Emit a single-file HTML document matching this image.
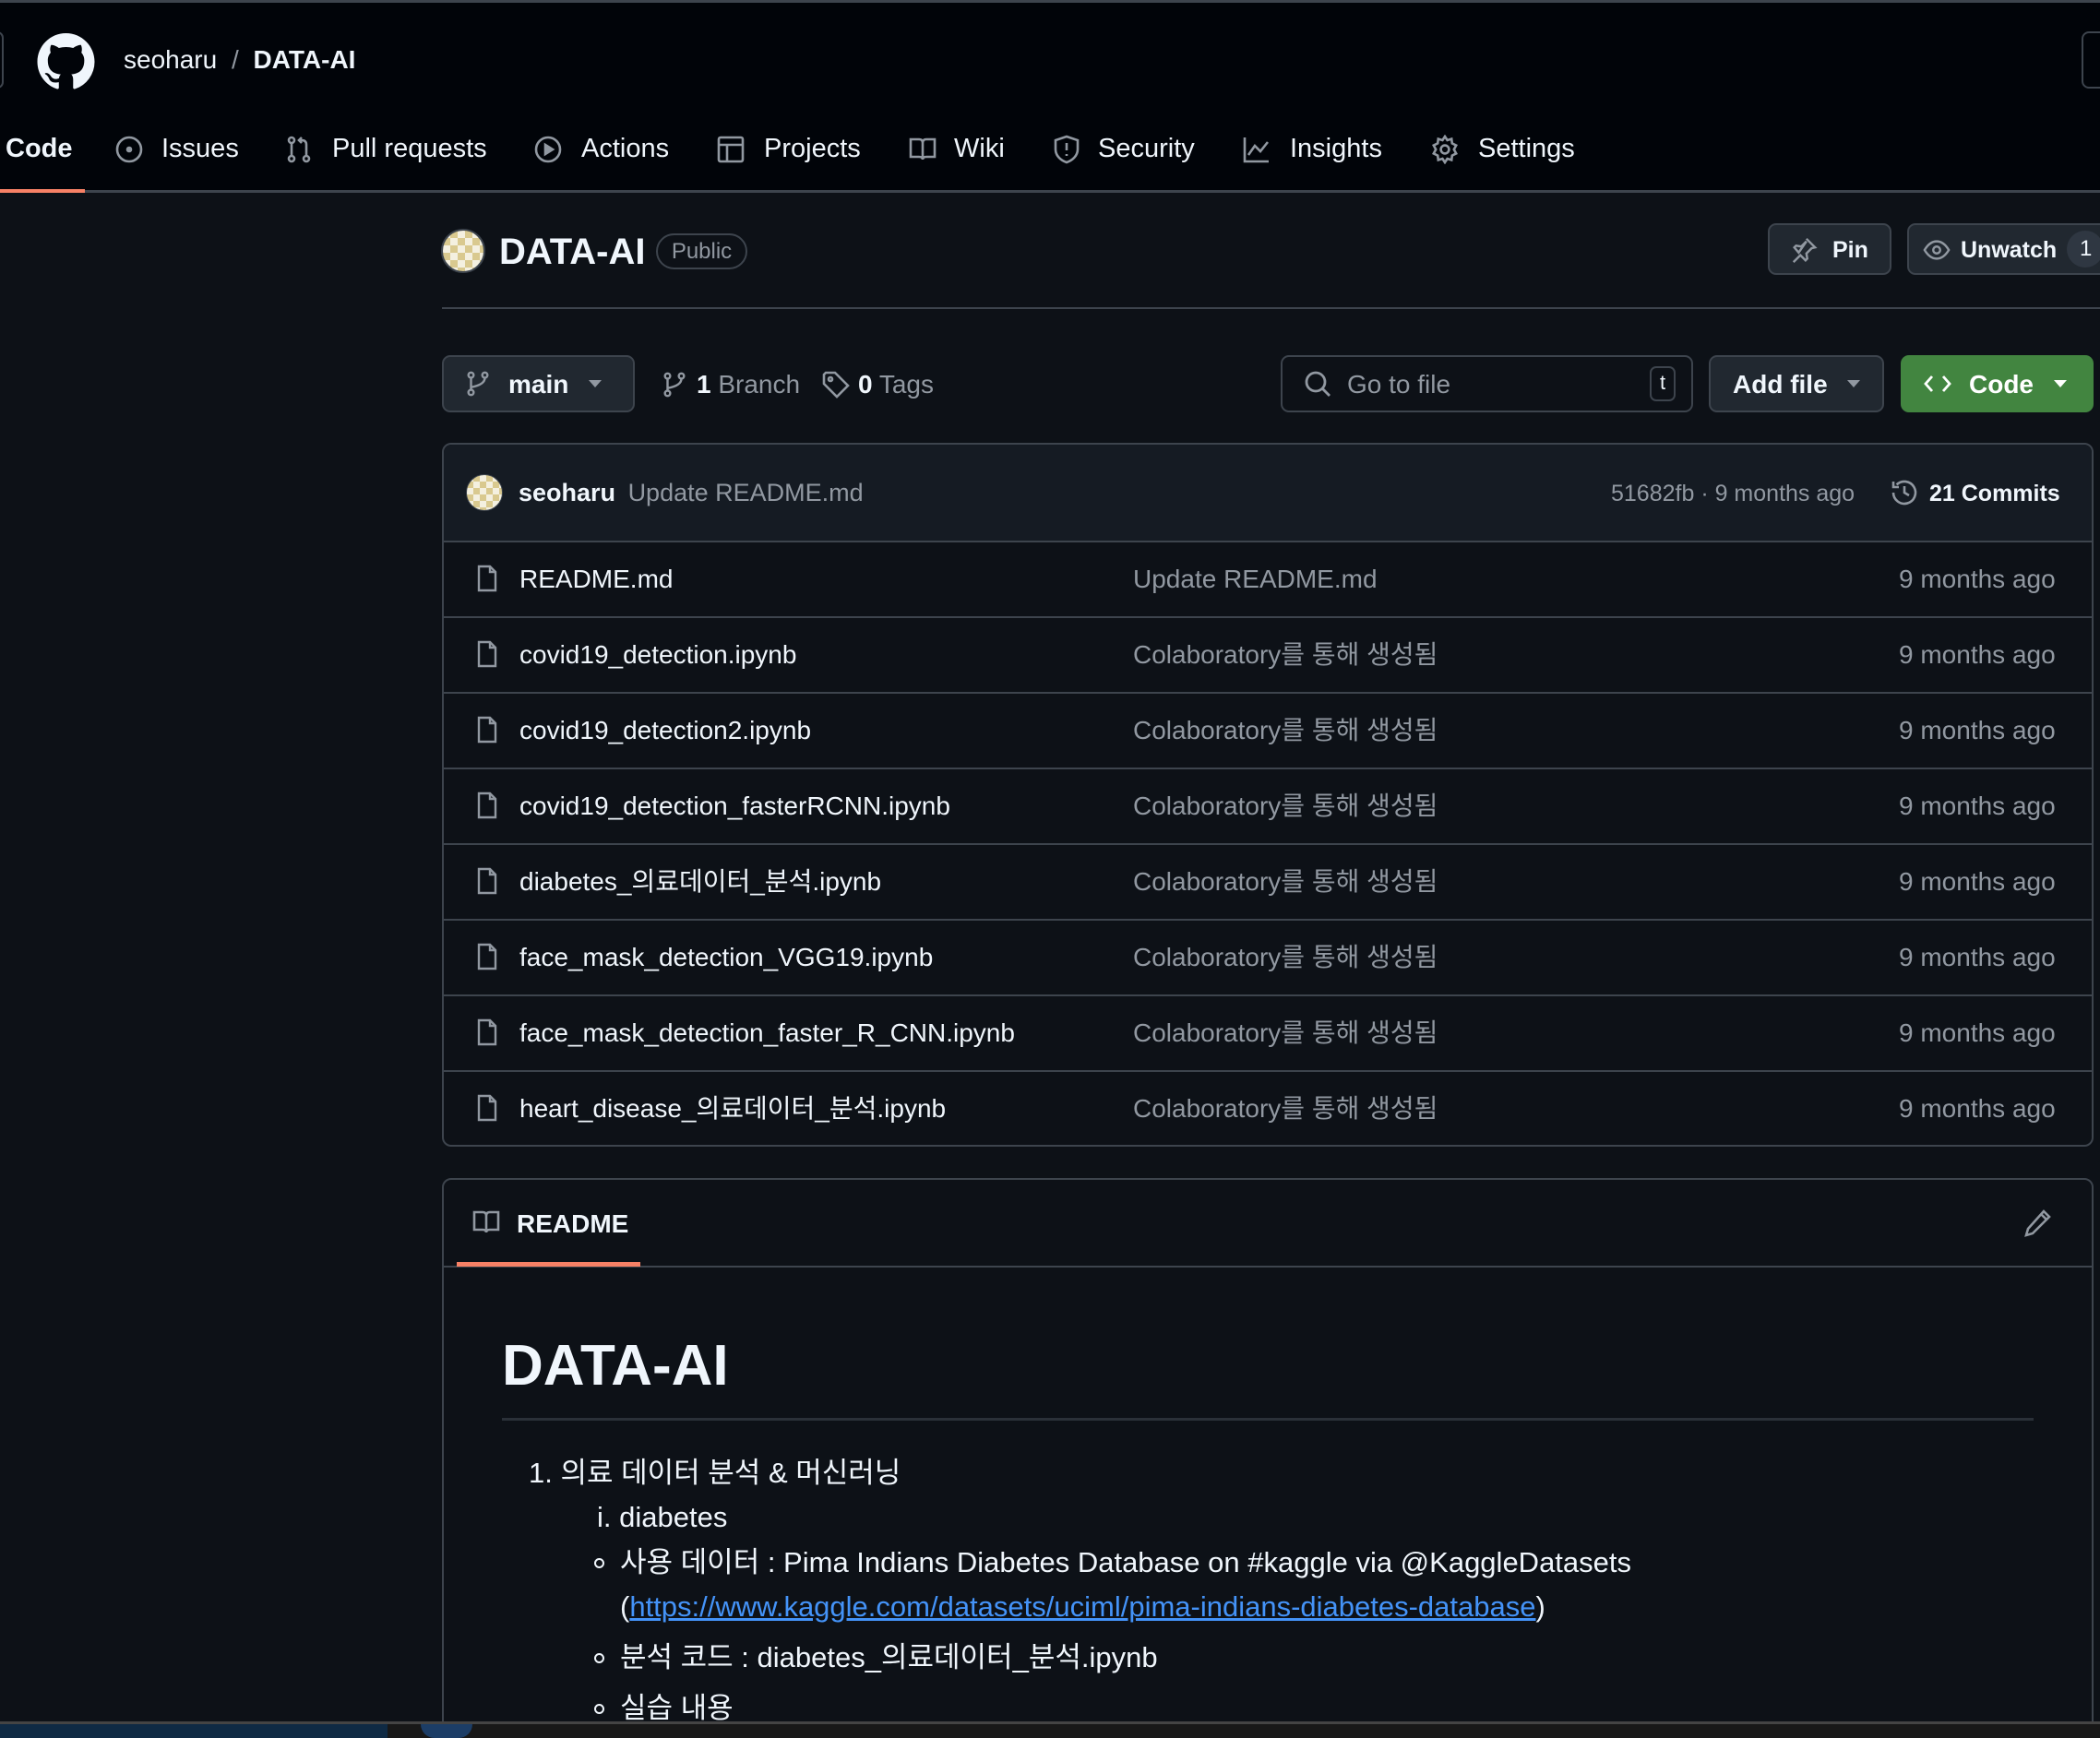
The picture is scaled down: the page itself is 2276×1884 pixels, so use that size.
<!DOCTYPE html>
<html style="width:2276px;height:1884px;overflow:hidden"><head><meta charset="utf-8"><style>
*{margin:0;padding:0;box-sizing:border-box}
html,body{width:2276px;height:1884px;overflow:hidden}
body{background:#0d1117;position:relative;font-family:"Liberation Sans","Noto Sans CJK KR",sans-serif;color:#f0f6fc}
.a{position:absolute;white-space:nowrap;line-height:1.2}
.g{color:#9198a1}
.b{font-weight:bold}
svg{position:absolute}
.btn{position:absolute;background:#212830;border:2px solid #3d444d;border-radius:9px}
.row{position:absolute;left:479px;width:1790px;height:82px;border-top:2px solid #3d444d}
.fr .a{line-height:34px;height:34px}
.dot{position:absolute;width:11px;height:11px;border:2px solid #f0f6fc;border-radius:50%}
</style></head><body>
<div class="a" style="left:0;top:0;width:2276px;height:209px;background:#010409;border-bottom:3px solid #3d444d"></div>
<div class="a" style="left:0;top:0;width:2276px;height:3px;background:#3d444d"></div>
<div class="a" style="left:0;top:205px;width:92px;height:4px;background:#f78166"></div>
<div class="a" style="left:-10px;top:34px;width:14px;height:62px;border:2px solid #3d444d;border-radius:8px"></div>
<div class="a" style="left:2256px;top:34px;width:40px;height:62px;border:2px solid #3d444d;border-radius:8px"></div>
<svg style="left:40px;top:36px" width="63" height="62" viewBox="0 0 16 16"><path fill="#f0f6fc" d="M8 0C3.58 0 0 3.580 0 8c0 3.54 2.29 6.53 5.47 7.59.4.07.55-.17.55-.38 0-.19-.01-.82-.01-1.49-2.010.37-2.53-.49-2.69-.94-.09-.23-.48-.94-.82-1.13-.28-.15-.68-.52-.01-.53.63-.01 1.08.58 1.23.82.72 1.21 1.87.87 2.33.66.07-.52.28-.87.51-1.07-1.78-.2-3.64-.89-3.64-3.95 0-.87.31-1.59.82-2.15-.08-.2-.36-1.02.08-2.12 0 0 .67-.21 2.2.82.64-.18 1.32-.27 2-.27.68 0 1.36.09 2 .27 1.53-1.04 2.2-.82 2.2-.82.44 1.1.16 1.92.08 2.12.51.56.82 1.27.82 2.15 0 3.07-1.87 3.75-3.65 3.95.29.25.54.73.54 1.48 0 1.07-.01 1.93-.01 2.2 0 .21.15.46.55.38A8.013 8.013 0 0016 8c0-4.42-3.58-8-8-8z"/></svg>
<div class="a" style="left:134px;top:48px;font-size:28px">seoharu <span class="g" style="margin:0 8px">/</span> <span class="b">DATA-AI</span></div>
<div class="a" style="top:144px;font-size:29px;left:0;width:1800px;height:40px">
<span class="a b" style="left:6px">Code</span>
<span class="a" style="left:175px">Issues</span>
<span class="a" style="left:360px">Pull requests</span>
<span class="a" style="left:630px">Actions</span>
<span class="a" style="left:828px">Projects</span>
<span class="a" style="left:1034px">Wiki</span>
<span class="a" style="left:1190px">Security</span>
<span class="a" style="left:1398px">Insights</span>
<span class="a" style="left:1602px">Settings</span>
</div>
<svg style="left:124px;top:146px" width="32" height="32" viewBox="0 0 16 16" fill="none" stroke="#9198a1" stroke-width="1.3"><circle cx="8" cy="8" r="6.5"/><circle cx="8" cy="8" r="1" fill="#9198a1"/></svg>
<svg style="left:308px;top:146px" width="32" height="32" viewBox="0 0 16 16" fill="none" stroke="#9198a1" stroke-width="1.3"><circle cx="4" cy="3" r="1.5"/><circle cx="4" cy="13" r="1.5"/><circle cx="12" cy="13" r="1.5"/><path d="M4 4.5v7M12 11.5V5.5Q12 3 9.5 3H8M9.5 1.5L8 3l1.5 1.5"/></svg>
<svg style="left:578px;top:146px" width="32" height="32" viewBox="0 0 16 16" fill="none" stroke="#9198a1" stroke-width="1.3"><circle cx="8" cy="8" r="6.5"/><path d="M6.5 5.5v5l4-2.5z" fill="#9198a1"/></svg>
<svg style="left:776px;top:146px" width="32" height="32" viewBox="0 0 16 16" fill="none" stroke="#9198a1" stroke-width="1.3"><rect x="1.5" y="1.5" width="13" height="13" rx="1"/><path d="M1.5 5.5h13M6 5.5v9"/></svg>
<svg style="left:984px;top:146px" width="32" height="32" viewBox="0 0 16 16" fill="none" stroke="#9198a1" stroke-width="1.3"><path d="M1.5 2.5h4.5q2 0 2 2v9q0-1.5-2-1.5H1.5zM14.5 2.5H10q-2 0-2 2v9q0-1.5 2-1.5h4.5z"/></svg>
<svg style="left:1140px;top:146px" width="32" height="32" viewBox="0 0 16 16" fill="none" stroke="#9198a1" stroke-width="1.3"><path d="M8 1l6 2v5c0 3.5-3 6-6 7-3-1-6-3.5-6-7V3z"/><path d="M8 4.5v4M8 10.5v1"/></svg>
<svg style="left:1346px;top:146px" width="32" height="32" viewBox="0 0 16 16" fill="none" stroke="#9198a1" stroke-width="1.3"><path d="M1.5 1.5v13h13M3.5 11l3.5-5 3 3 4-5"/></svg>
<svg style="left:1550px;top:146px" width="32" height="32" viewBox="0 0 16 16" fill="none" stroke="#9198a1" stroke-width="1.3"><circle cx="8" cy="8" r="2.2"/><path d="M8 1l1.3 2 2.3-.7.3 2.4 2.2 1.1-1.2 2.2 1.2 2.2-2.2 1.1-.3 2.4-2.3-.7L8 15l-1.3-2-2.3.7-.3-2.4-2.2-1.1 1.2-2.2L1.9 5.8l2.2-1.1.3-2.4 2.3.7z"/></svg>

<div class="a" style="left:478px;top:248px;width:48px;height:48px;border-radius:50%;background:repeating-conic-gradient(#d9c98f 0 25%,#f4f0e0 0 50%) 0 0/16px 16px;border:2px solid #3d444d"></div>
<div class="a b" style="left:541px;top:249px;font-size:40px">DATA-AI</div>
<div class="a g" style="left:711px;top:253px;width:99px;height:39px;border:2px solid #3d444d;border-radius:20px;font-size:24px;text-align:center;line-height:35px">Public</div>
<div class="btn" style="left:1916px;top:242px;width:134px;height:56px"></div>
<svg style="left:1940px;top:256px" width="30" height="30" viewBox="0 0 16 16" fill="none" stroke="#9198a1" stroke-width="1.3"><path d="M9.5 1.5l5 5-2 .5-3 3 .5 3-1 1-3-3-4 4M5 9.5l-2.5-3 1-1 3 .5 3-3z"/></svg>
<div class="a b" style="left:1986px;top:256px;font-size:25px">Pin</div>
<div class="btn" style="left:2067px;top:242px;width:240px;height:56px"></div>
<svg style="left:2084px;top:256px" width="30" height="30" viewBox="0 0 16 16" fill="none" stroke="#9198a1" stroke-width="1.3"><path d="M1 8q3-5 7-5t7 5q-3 5-7 5t-7-5z"/><circle cx="8" cy="8" r="2"/></svg>
<div class="a b" style="left:2125px;top:256px;font-size:25px">Unwatch</div>
<div class="a" style="left:2240px;top:250px;width:40px;height:40px;border-radius:20px;background:#2f3742;font-size:24px;line-height:40px;padding-left:14px">1</div>
<div class="a" style="left:479px;top:333px;width:1797px;height:2px;background:#3d444d"></div>

<div class="btn" style="left:479px;top:385px;width:209px;height:62px"></div>
<svg style="left:503px;top:400px" width="30" height="32" viewBox="0 0 16 16" fill="none" stroke="#9198a1" stroke-width="1.3"><circle cx="4" cy="3" r="1.5"/><circle cx="4" cy="13" r="1.5"/><circle cx="12" cy="3" r="1.5"/><path d="M4 4.5v7M12 4.5q0 4-8 5.5"/></svg>
<div class="a b" style="left:551px;top:400px;font-size:28px">main</div>
<svg style="left:638px;top:411px" width="14" height="10" viewBox="0 0 14 10"><path d="M0 1h14L7 9z" fill="#9198a1"/></svg>
<svg style="left:716px;top:401px" width="30" height="32" viewBox="0 0 16 16" fill="none" stroke="#9198a1" stroke-width="1.3"><circle cx="4" cy="3" r="1.5"/><circle cx="4" cy="13" r="1.5"/><circle cx="12" cy="3" r="1.5"/><path d="M4 4.5v7M12 4.5q0 4-8 5.5"/></svg>
<div class="a g" style="left:755px;top:400px;font-size:28px"><span class="b" style="color:#f0f6fc">1</span> Branch</div>
<svg style="left:890px;top:401px" width="32" height="32" viewBox="0 0 16 16" fill="none" stroke="#9198a1" stroke-width="1.3"><path d="M1.5 2.5v5l7 7 6-6-7-7h-5z"/><circle cx="5" cy="5" r="1"/></svg>
<div class="a g" style="left:930px;top:400px;font-size:28px"><span class="b" style="color:#f0f6fc">0</span> Tags</div>
<div class="a" style="left:1388px;top:385px;width:447px;height:62px;border:2px solid #3d444d;border-radius:9px;background:#0d1117"></div>
<svg style="left:1412px;top:400px" width="32" height="32" viewBox="0 0 16 16" fill="none" stroke="#9198a1" stroke-width="1.4"><circle cx="7" cy="7" r="5"/><path d="M10.5 10.5l4 4"/></svg>
<div class="a g" style="left:1460px;top:400px;font-size:28px">Go to file</div>
<div class="a" style="left:1788px;top:397px;width:28px;height:38px;border:2px solid #3d444d;border-radius:7px;font-size:22px;text-align:center;line-height:32px;color:#f0f6fc">t</div>
<div class="btn" style="left:1852px;top:385px;width:190px;height:62px"></div>
<div class="a b" style="left:1878px;top:400px;font-size:28px">Add file</div>
<svg style="left:2002px;top:411px" width="14" height="10" viewBox="0 0 14 10"><path d="M0 1h14L7 9z" fill="#9198a1"/></svg>
<div class="a" style="left:2060px;top:385px;width:209px;height:62px;border-radius:9px;background:#428540"></div>
<svg style="left:2084px;top:400px" width="32" height="32" viewBox="0 0 16 16" fill="none" stroke="#fff" stroke-width="1.4"><path d="M5 4L1.5 8 5 12M11 4l3.5 4-3.5 4"/></svg>
<div class="a b" style="left:2134px;top:400px;font-size:28px;color:#fff">Code</div>
<svg style="left:2226px;top:411px" width="14" height="10" viewBox="0 0 14 10"><path d="M0 1h14L7 9z" fill="#fff"/></svg>

<div class="a" style="left:479px;top:480px;width:1790px;height:763px;border:2px solid #3d444d;border-radius:10px"></div>
<div class="a" style="left:481px;top:482px;width:1786px;height:104px;background:#151b23;border-radius:9px 9px 0 0"></div>
<div class="a" style="left:505px;top:514px;width:40px;height:40px;border-radius:50%;background:repeating-conic-gradient(#d9c98f 0 25%,#f4f0e0 0 50%) 0 0/14px 14px;border:1px solid #3d444d"></div>
<div class="a" style="left:562px;top:518px;font-size:27px"><span class="b">seoharu</span> <span class="g" style="margin-left:6px">Update README.md</span></div>
<div class="a g" style="left:1746px;top:520px;font-size:25px">51682fb · 9 months ago</div>
<svg style="left:2048px;top:518px" width="32" height="32" viewBox="0 0 16 16" fill="none" stroke="#9198a1" stroke-width="1.3"><path d="M2 8a6 6 0 1 0 1.8-4.3M2 2v3h3"/><path d="M8 4.5V8l2.5 1.5"/></svg>
<div class="a b" style="left:2091px;top:520px;font-size:25px">21 Commits</div>

<div class="row" style="top:586px"></div>
<div class="row" style="top:668px"></div>
<div class="row" style="top:750px"></div>
<div class="row" style="top:832px"></div>
<div class="row" style="top:914px"></div>
<div class="row" style="top:996px"></div>
<div class="row" style="top:1078px"></div>
<div class="row" style="top:1160px;height:83px"></div>

<div class="fr" style="position:absolute;left:0;top:0;font-size:28px">
<div class="a" style="left:563px;top:611px">README.md</div><div class="a g" style="left:1228px;top:611px">Update README.md</div><div class="a g" style="left:2058px;top:611px">9 months ago</div>
<div class="a" style="left:563px;top:693px">covid19_detection.ipynb</div><div class="a g" style="left:1228px;top:693px">Colaboratory를 통해 생성됨</div><div class="a g" style="left:2058px;top:693px">9 months ago</div>
<div class="a" style="left:563px;top:775px">covid19_detection2.ipynb</div><div class="a g" style="left:1228px;top:775px">Colaboratory를 통해 생성됨</div><div class="a g" style="left:2058px;top:775px">9 months ago</div>
<div class="a" style="left:563px;top:857px">covid19_detection_fasterRCNN.ipynb</div><div class="a g" style="left:1228px;top:857px">Colaboratory를 통해 생성됨</div><div class="a g" style="left:2058px;top:857px">9 months ago</div>
<div class="a" style="left:563px;top:939px">diabetes_의료데이터_분석.ipynb</div><div class="a g" style="left:1228px;top:939px">Colaboratory를 통해 생성됨</div><div class="a g" style="left:2058px;top:939px">9 months ago</div>
<div class="a" style="left:563px;top:1021px">face_mask_detection_VGG19.ipynb</div><div class="a g" style="left:1228px;top:1021px">Colaboratory를 통해 생성됨</div><div class="a g" style="left:2058px;top:1021px">9 months ago</div>
<div class="a" style="left:563px;top:1103px">face_mask_detection_faster_R_CNN.ipynb</div><div class="a g" style="left:1228px;top:1103px">Colaboratory를 통해 생성됨</div><div class="a g" style="left:2058px;top:1103px">9 months ago</div>
<div class="a" style="left:563px;top:1185px">heart_disease_의료데이터_분석.ipynb</div><div class="a g" style="left:1228px;top:1185px">Colaboratory를 통해 생성됨</div><div class="a g" style="left:2058px;top:1185px">9 months ago</div>
</div>
<svg style="left:512px;top:610px" width="32" height="34" viewBox="0 0 16 16" fill="none" stroke="#9198a1" stroke-width="1.2"><path d="M3.5 1.5h6l3 3v10h-9z M9.5 1.5v3h3"/></svg>
<svg style="left:512px;top:692px" width="32" height="34" viewBox="0 0 16 16" fill="none" stroke="#9198a1" stroke-width="1.2"><path d="M3.5 1.5h6l3 3v10h-9z M9.5 1.5v3h3"/></svg>
<svg style="left:512px;top:774px" width="32" height="34" viewBox="0 0 16 16" fill="none" stroke="#9198a1" stroke-width="1.2"><path d="M3.5 1.5h6l3 3v10h-9z M9.5 1.5v3h3"/></svg>
<svg style="left:512px;top:856px" width="32" height="34" viewBox="0 0 16 16" fill="none" stroke="#9198a1" stroke-width="1.2"><path d="M3.5 1.5h6l3 3v10h-9z M9.5 1.5v3h3"/></svg>
<svg style="left:512px;top:938px" width="32" height="34" viewBox="0 0 16 16" fill="none" stroke="#9198a1" stroke-width="1.2"><path d="M3.5 1.5h6l3 3v10h-9z M9.5 1.5v3h3"/></svg>
<svg style="left:512px;top:1020px" width="32" height="34" viewBox="0 0 16 16" fill="none" stroke="#9198a1" stroke-width="1.2"><path d="M3.5 1.5h6l3 3v10h-9z M9.5 1.5v3h3"/></svg>
<svg style="left:512px;top:1102px" width="32" height="34" viewBox="0 0 16 16" fill="none" stroke="#9198a1" stroke-width="1.2"><path d="M3.5 1.5h6l3 3v10h-9z M9.5 1.5v3h3"/></svg>
<svg style="left:512px;top:1184px" width="32" height="34" viewBox="0 0 16 16" fill="none" stroke="#9198a1" stroke-width="1.2"><path d="M3.5 1.5h6l3 3v10h-9z M9.5 1.5v3h3"/></svg>

<div class="a" style="left:479px;top:1277px;width:1790px;height:620px;border:2px solid #3d444d;border-radius:10px"></div>
<div class="a" style="left:481px;top:1372px;width:1786px;height:2px;background:#3d444d"></div>
<div class="a" style="left:495px;top:1368px;width:199px;height:5px;background:#f78166"></div>
<svg style="left:510px;top:1309px" width="34" height="32" viewBox="0 0 16 16" fill="none" stroke="#9198a1" stroke-width="1.3"><path d="M1.5 2.5h4.5q2 0 2 2v9q0-1.5-2-1.5H1.5zM14.5 2.5H10q-2 0-2 2v9q0-1.5 2-1.5h4.5z"/></svg>
<div class="a b" style="left:560px;top:1310px;font-size:28px">README</div>
<svg style="left:2192px;top:1310px" width="32" height="32" viewBox="0 0 16 16" fill="none" stroke="#9198a1" stroke-width="1.3"><path d="M11.5 1.5l3 3-9 9-3.5 1 1-3.5z M10 3l3 3"/></svg>

<div class="a b" style="left:544px;top:1444px;font-size:62px">DATA-AI</div>
<div class="a" style="left:544px;top:1537px;width:1660px;height:3px;background:#2a3038"></div>
<div class="fr" style="position:absolute;left:0;top:0;font-size:31px">
<div class="a" style="left:573px;top:1580px">1. 의료 데이터 분석 &amp; 머신러닝</div>
<div class="a" style="left:647px;top:1628px">i. diabetes</div>
<div class="dot" style="left:644px;top:1689px"></div>
<div class="a" style="left:672px;top:1677px">사용 데이터 : Pima Indians Diabetes Database on #kaggle via @KaggleDatasets</div>
<div class="a" style="left:672px;top:1725px">(<span style="color:#4493f8;text-decoration:underline">https://www.kaggle.com/datasets/uciml/pima-indians-diabetes-database</span>)</div>
<div class="dot" style="left:644px;top:1792px"></div>
<div class="a" style="left:672px;top:1780px">분석 코드 : diabetes_의료데이터_분석.ipynb</div>
<div class="dot" style="left:644px;top:1847px"></div>
<div class="a" style="left:672px;top:1835px">실습 내용</div>
</div>

<div class="a" style="left:0;top:1866px;width:2276px;height:18px;background:#181818;border-top:3px solid #444"></div>
<div class="a" style="left:0;top:1869px;width:420px;height:15px;background:#0f2a44"></div>
<div class="a" style="left:456px;top:1869px;width:56px;height:15px;background:#1c3d66;border-radius:0 0 20px 20px"></div>
</body></html>
